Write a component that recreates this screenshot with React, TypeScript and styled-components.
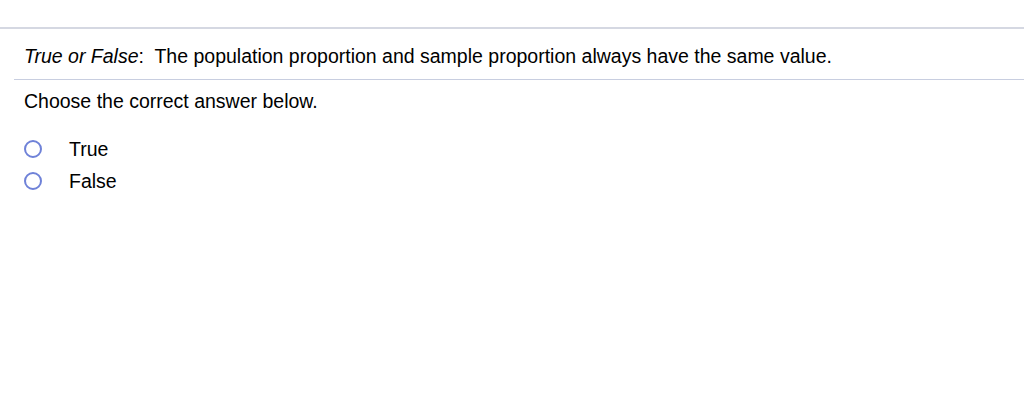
import React from 'react'
import styled, { createGlobalStyle } from 'styled-components'

const GlobalStyle = createGlobalStyle`
  html, body {
    margin: 0;
    padding: 0;
    background: #ffffff;
  }
  body {
    font-family: "Liberation Sans", Arial, sans-serif;
    color: #000000;
  }
`

const Page = styled.div`
  width: 1024px;
  height: 403px;
  padding-top: 27px;
  box-sizing: border-box;
`

const TopRule = styled.div`
  height: 2px;
  background: #d5d8e2;
`

const Question = styled.div`
  margin-left: 14px;
  border-bottom: 1px solid #c8cee0;
  padding: 16px 0 0 10px;
  height: 34px;
  font-size: 19.5px;
  line-height: 22px;
  white-space: nowrap;
`

const Em = styled.i`
  font-style: italic;
`

const Body = styled.div`
  padding: 10px 0 0 24px;
  font-size: 19.5px;
  line-height: 22px;
`

const Options = styled.ul`
  list-style: none;
  margin: 27px 0 0;
  padding: 0;
  display: flex;
  flex-direction: column;
  gap: 12px;
`

const Option = styled.li`
  display: flex;
  align-items: center;
  height: 20px;
`

const Radio = styled.span`
  width: 14px;
  height: 14px;
  border: 2px solid #6f82d8;
  border-radius: 50%;
  box-sizing: content-box;
  flex-shrink: 0;
`

const Label = styled.span`
  margin-left: 27px;
`

const App = () => {
  const answers = ['True', 'False']
  return (
    <>
      <GlobalStyle />
      <Page>
        <TopRule />
        <Question>
          <Em>True or False</Em>:&nbsp; The population proportion and sample proportion always have the same value.
        </Question>
        <Body>
          <div>Choose the correct answer below.</div>
          <Options>
            {answers.map(a => (
              <Option key={a}>
                <Radio />
                <Label>{a}</Label>
              </Option>
            ))}
          </Options>
        </Body>
      </Page>
    </>
  )
}

export default App
